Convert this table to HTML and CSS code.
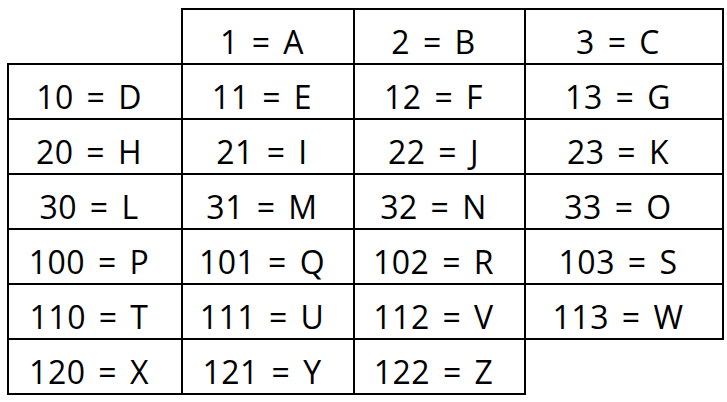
FILE: index.html
```html
<!DOCTYPE html>
<html lang="en">
<head>
<meta charset="utf-8">
<title>Number code table</title>
<link rel="stylesheet" href="styles.css">
</head>
<body>
<table class="code">
<colgroup>
<col class="c1"><col class="c2"><col class="c3"><col class="c4">
</colgroup>
<tbody>
<tr><td class="blank"></td><td>1 = A</td><td>2 = B</td><td>3 = C</td></tr>
<tr><td>10 = D</td><td>11 = E</td><td>12 = F</td><td>13 = G</td></tr>
<tr><td>20 = H</td><td>21 = I</td><td>22 = J</td><td>23 = K</td></tr>
<tr><td>30 = L</td><td>31 = M</td><td>32 = N</td><td>33 = O</td></tr>
<tr><td>100 = P</td><td>101 = Q</td><td>102 = R</td><td>103 = S</td></tr>
<tr><td>110 = T</td><td>111 = U</td><td>112 = V</td><td>113 = W</td></tr>
<tr><td>120 = X</td><td>121 = Y</td><td>122 = Z</td><td class="blank"></td></tr>
</tbody>
</table>
</body>
</html>
```
FILE: styles.css
```css
html, body {
  margin: 0;
  padding: 0;
  background: #fff;
}
.code {
  border-collapse: collapse;
  table-layout: fixed;
  width: 715px;
  margin: 8px 0 0 7px;
  font-family: "Open Sans", "Liberation Sans", sans-serif;
  font-size: 32px;
  color: #000;
}
.c1 { width: 174px; }
.c2 { width: 172px; }
.c3 { width: 171px; }
.c4 { width: 198px; }
.code td {
  border: 2px solid #000;
  height: 55px;
  padding: 0 12px 6px 0;
  box-sizing: border-box;
  text-align: center;
  vertical-align: bottom;
  line-height: 31px;
  letter-spacing: 0.5px;
  word-spacing: 4px;
  white-space: nowrap;
}
.code td.blank {
  border: none;
}
```
